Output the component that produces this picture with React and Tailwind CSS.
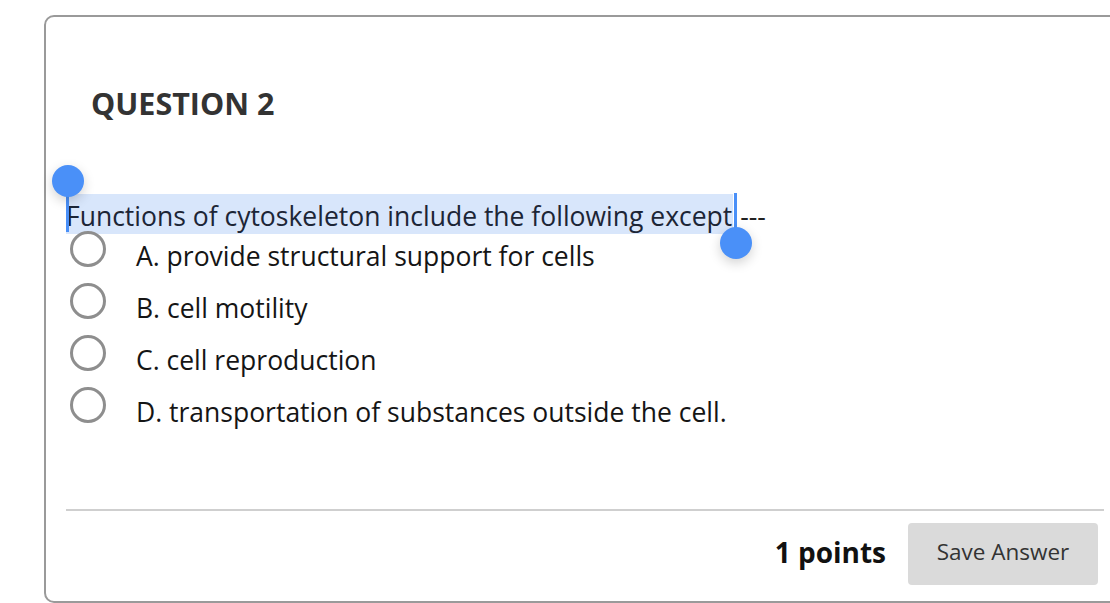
import React from "react";

const options = [
  "A. provide structural support for cells",
  "B. cell motility",
  "C. cell reproduction",
  "D. transportation of substances outside the cell.",
];

function Handle({ className }) {
  return (
    <div
      className={`absolute w-[32px] h-[32px] rounded-full bg-[#4a90f8] shadow-[0_4px_12px_rgba(0,0,0,0.18)] ${className}`}
    />
  );
}

export default function App() {
  return (
    <div
      className="w-[1110px] h-[603px] overflow-hidden bg-white"
      style={{ fontFamily: '"Open Sans", "Liberation Sans", sans-serif' }}
    >
      <div className="relative ml-[44px] mt-[15px] w-[1100px] h-[588px] border-2 border-[#9a9a9a] rounded-l-[10px] bg-white">
        {/* heading */}
        <h2 className="mt-[66px] pl-[45px] text-[30.5px] leading-[40px] font-bold text-[#333]">
          QUESTION 2
        </h2>

        {/* question text with selection */}
        <div className="mt-[71px] pl-[20px] h-[40px] text-[26.5px] leading-[40px] text-[#222] whitespace-nowrap">
          <span className="inline-block h-[40px] pt-[2px] leading-[40px] bg-[#d8e6fb] text-[#1c2536] pr-[1px]">
            Functions of cytoskeleton include the following except
          </span>
          <span> ---</span>
        </div>

        {/* options */}
        <div className="-mt-[6px]">
          {options.map((opt) => (
            <div key={opt} className="flex h-[52px] pl-[24px]">
              <div className="mt-[3px] w-[36px] h-[36px] shrink-0 rounded-full border-[3px] border-[#8e8e8e] bg-white" />
              <span className="ml-[30px] text-[26.5px] leading-[56px] text-[#151515] whitespace-nowrap">
                {opt}
              </span>
            </div>
          ))}
        </div>

        {/* divider */}
        <div className="mt-[73px] ml-[20px] w-[1038px] h-[2px] bg-[#cfcfcf]" />

        {/* footer */}
        <div className="mt-[12px] w-[1052px] flex justify-end items-center gap-[22px]">
          <span className="mb-[5px] text-[28px] font-bold text-[#111]">1 points</span>
          <button className="w-[190px] h-[62px] pb-[4px] rounded-[4px] bg-[#dadada] text-[22.5px] text-[#333]">
            Save Answer
          </button>
        </div>

        {/* selection handles */}
        <div className="absolute left-[20px] top-[164px] w-[3px] h-[51px] bg-[#4a90f8]" />
        <Handle className="left-[6px] top-[148px]" />
        <div className="absolute left-[688px] top-[176px] w-[3px] h-[50px] bg-[#4a90f8]" />
        <Handle className="left-[674px] top-[210px]" />
      </div>
    </div>
  );
}
